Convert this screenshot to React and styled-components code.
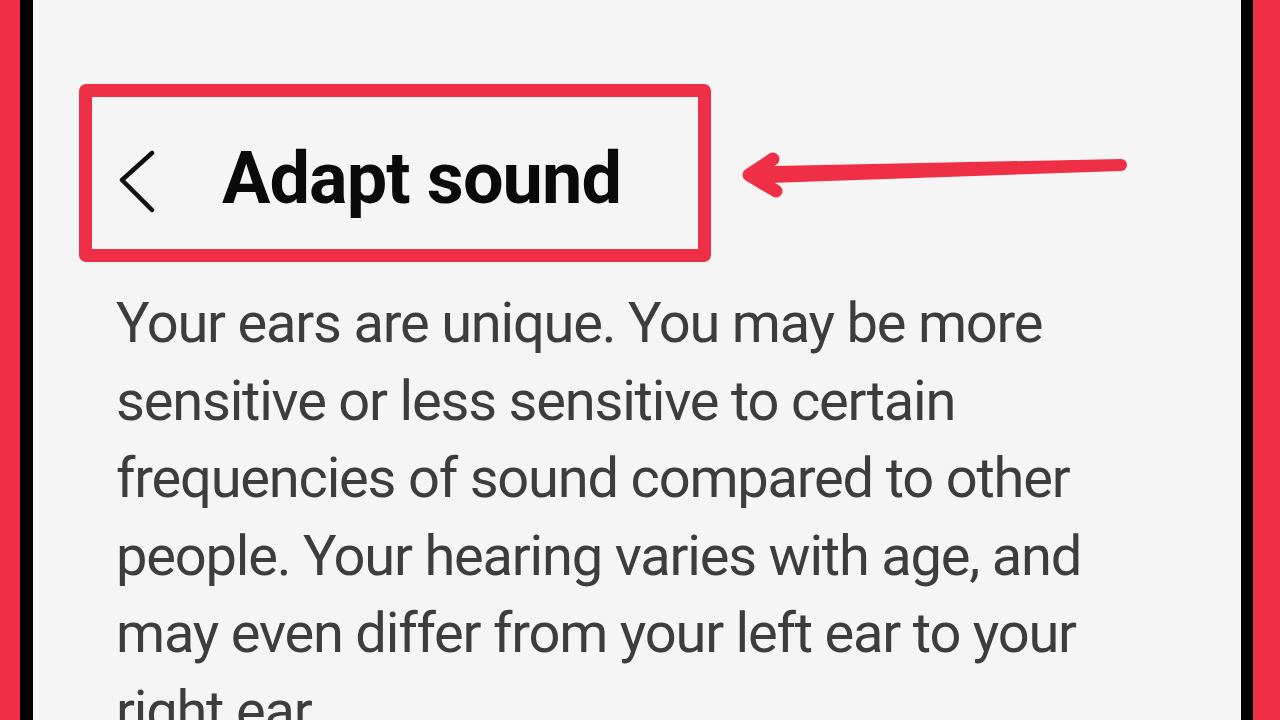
import React from "react";
import styled, { createGlobalStyle } from "styled-components";

const RED = "#ee2f45";

const GlobalStyle = createGlobalStyle`
  html, body {
    margin: 0;
    padding: 0;
    height: 100%;
    overflow: hidden;
  }
  body {
    font-family: Roboto, "Noto Sans", "Liberation Sans", sans-serif;
    background: ${RED};
  }
`;

const Frame = styled.div`
  display: flex;
  width: 1280px;
  height: 720px;
  overflow: hidden;
`;

const Edge = styled.div`
  flex: 0 0 ${(p) => p.$width}px;
  background: ${RED};
`;

const Bezel = styled.div`
  flex: 0 0 ${(p) => p.$width}px;
  background: #000;
`;

const Screen = styled.main`
  position: relative;
  flex: 1;
  background: #f5f5f5;
  padding: 84px 0 0 46px;
  box-sizing: border-box;
  overflow: hidden;
`;

const Header = styled.header`
  display: flex;
  align-items: flex-start;
  width: 632px;
  height: 178px;
  box-sizing: border-box;
  border: 13px solid ${RED};
  border-radius: 7px;
`;

const BackButton = styled.button`
  display: flex;
  margin: 53px 0 0 26px;
  padding: 0;
  border: 0;
  background: none;
  color: #111;
`;

const Title = styled.h1`
  margin: 46px 0 0 66px;
  font-size: 72px;
  line-height: 1;
  font-weight: 700;
  letter-spacing: -0.9px;
  color: #0a0a0a;
  white-space: nowrap;
`;

const Description = styled.p`
  margin: 23px 0 0 37px;
  font-size: 56px;
  line-height: 77.5px;
  font-weight: 400;
  letter-spacing: -1.2px;
  color: #3d3d3d;
  white-space: nowrap;
`;

const Pointer = styled.svg`
  position: absolute;
  left: 697px;
  top: 140px;
`;

const Chevron = () => (
  <svg width="38" height="63" viewBox="0 0 38 63">
    <polyline
      points="34,3 4,30 34,60"
      fill="none"
      stroke="currentColor"
      strokeWidth="4.5"
      strokeLinecap="round"
      strokeLinejoin="round"
    />
  </svg>
);

const Arrow = () => (
  <Pointer width="410" height="70" viewBox="0 0 410 70">
    <polygon points="22,26.5 391,19 391,31 22,43.5" fill={RED} />
    <circle cx="391" cy="25" r="6" fill={RED} />
    <polyline
      points="43,19 19,35 46,51"
      fill="none"
      stroke={RED}
      strokeWidth="13"
      strokeLinecap="round"
      strokeLinejoin="round"
    />
  </Pointer>
);

export default function App() {
  return (
    <>
      <GlobalStyle />
      <Frame>
        <Edge $width={20} />
        <Bezel $width={13} />
        <Screen>
          <Header>
            <BackButton aria-label="Back">
              <Chevron />
            </BackButton>
            <Title>Adapt sound</Title>
          </Header>
          <Description>
            Your ears are unique. You may be more
            <br />
            sensitive or less sensitive to certain
            <br />
            frequencies of sound compared to other
            <br />
            people. Your hearing varies with age, and
            <br />
            may even differ from your left ear to your
            <br />
            right ear.
          </Description>
          <Arrow />
        </Screen>
        <Bezel $width={12} />
        <Edge $width={27} />
      </Frame>
    </>
  );
}
